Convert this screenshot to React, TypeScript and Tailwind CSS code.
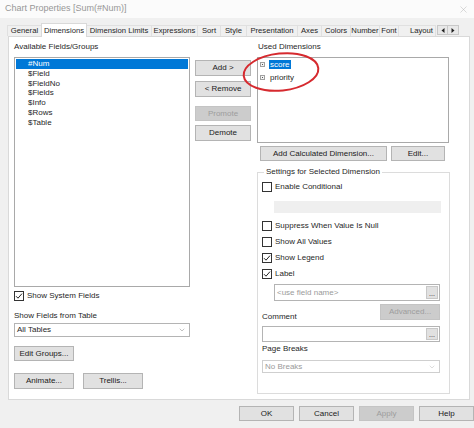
import { ChevronDown, X } from "lucide-react";

type BtnProps = { children?: React.ReactNode; className?: string; disabled?: boolean };

function Btn({ children, className = "", disabled = false }: BtnProps) {
  return (
    <div
      className={`flex items-center justify-center border ${
        disabled ? "bg-[#cccccc] border-[#c4c4c4] text-[#9d9d9d]" : "bg-[#e1e1e1] border-[#b4b4b4] text-[#1a1a1a]"
      } ${className}`}
    >
      {children}
    </div>
  );
}

function Check({ checked = false, label }: { checked?: boolean; label: string }) {
  return (
    <div className="flex items-center h-[10px] gap-[3px]">
      <div className="w-[10px] h-[10px] border border-[#333] bg-white flex items-center justify-center">
        {checked && (
          <svg width="8" height="8" viewBox="0 0 8 8">
            <path d="M1 4.2 L3 6.2 L7 1.6" fill="none" stroke="#222" strokeWidth="1" />
          </svg>
        )}
      </div>
      <span className="leading-[10px]">{label}</span>
    </div>
  );
}

const tabs: { label: string; w: string; active?: boolean; cls?: string }[] = [
  { label: "General", w: "w-[35px]" },
  { label: "Dimensions", w: "w-[46px]", active: true },
  { label: "Dimension Limits", w: "w-[66px]" },
  { label: "Expressions", w: "w-[47px]" },
  { label: "Sort", w: "w-[24px]" },
  { label: "Style", w: "w-[27px]" },
  { label: "Presentation", w: "w-[52px]" },
  { label: "Axes", w: "w-[25px]" },
  { label: "Colors", w: "w-[30px]" },
  { label: "Number", w: "w-[30px]" },
  { label: "Font", w: "w-[20px]" },
  { label: "Layout", w: "w-[38px]", cls: "justify-end pr-[2px]" },
];

const fields = ["#Num", "$Field", "$FieldNo", "$Fields", "$Info", "$Rows", "$Table"];

function TreeBox() {
  return (
    <div className="w-[5px] h-[5px] border border-[#a0a0a0] bg-[#f4f4f4] flex items-center justify-center mr-[4px]">
      <div className="w-[1px] h-[1px] bg-[#555]" />
    </div>
  );
}

export default function App() {
  return (
    <div className="relative w-[474px] h-[428px] overflow-hidden bg-[#f0f0f0] text-[8px] text-[#1f1f1f] font-['Liberation_Sans',Arial,sans-serif]">
      {/* title bar */}
      <div className="h-[18px] bg-[#fbfbfb] flex items-center justify-between pl-[5px] pr-[5px]">
        <span className="text-[9px] text-[#979797]">Chart Properties [Sum(#Num)]</span>
        <X size={11} strokeWidth={1} className="text-[#b0b0b0]" />
      </div>

      {/* tabs */}
      <div className="flex items-end h-[18px] pl-[8px] text-[7.7px]">
        {tabs.map((t) =>
          t.active ? (
            <div
              key={t.label}
              className={`${t.w} h-[14px] -ml-px -mb-px bg-white border border-[#d9d9d9] border-b-0 flex items-center justify-center relative z-10`}
            >
              {t.label}
            </div>
          ) : (
            <div
              key={t.label}
              className={`${t.w} h-[11px] -ml-px bg-[#f0f0f0] border border-[#e0e0e0] border-b-0 flex items-center ${t.cls ?? "justify-center"}`}
            >
              {t.label}
            </div>
          )
        )}
        <div className="ml-[1px] mb-[1px] flex h-[10px] border border-[#c8c8c8] bg-[#e8e8e8]">
          <div className="w-[10px] flex items-center justify-center border-r border-[#c8c8c8]">
            <svg width="4" height="5" viewBox="0 0 4 5"><path d="M3.5 0 L0.5 2.5 L3.5 5Z" fill="#222" /></svg>
          </div>
          <div className="w-[10px] flex items-center justify-center">
            <svg width="4" height="5" viewBox="0 0 4 5"><path d="M0.5 0 L3.5 2.5 L0.5 5Z" fill="#222" /></svg>
          </div>
        </div>
      </div>

      {/* tab content panel */}
      <div className="ml-[8px] w-[462px] h-[364px] bg-white border border-[#d9d9d9] flex pt-[5px] pl-[5px]">
        {/* left column */}
        <div className="w-[176px] flex flex-col">
          <div className="leading-[10px] h-[10px]">Available Fields/Groups</div>
          <div className="mt-[5px] h-[230px] border border-[#a9a9a9] pt-px px-px">
            {fields.map((f, i) => (
              <div
                key={f}
                className={`h-[9.8px] leading-[9.8px] pl-[12px] ${i === 0 ? "bg-[#0078d7] text-white" : ""}`}
              >
                {f}
              </div>
            ))}
          </div>
          <div className="mt-[4px]">
            <Check checked label="Show System Fields" />
          </div>
          <div className="mt-[10px] leading-[10px] h-[10px]">Show Fields from Table</div>
          <div className="mt-[2px] h-[14px] border border-[#b4b4b4] flex items-center justify-between pl-[2px] pr-[3px]">
            <span>All Tables</span>
            <ChevronDown size={8} strokeWidth={1.2} className="text-[#666]" />
          </div>
          <Btn className="mt-[9px] w-[60px] h-[15px]">Edit Groups...</Btn>
          <div className="mt-[12px] flex gap-[9px]">
            <Btn className="w-[60px] h-[16px]">Animate...</Btn>
            <Btn className="w-[60px] h-[16px]">Trellis...</Btn>
          </div>
        </div>

        {/* middle buttons */}
        <div className="ml-[5px] w-[56px] flex flex-col pt-[18px]">
          <Btn className="h-[16px]">Add &gt;</Btn>
          <Btn className="mt-[5px] h-[16px]">&lt; Remove</Btn>
          <Btn disabled className="mt-[9px] h-[15px]">Promote</Btn>
          <Btn className="mt-[4px] h-[16px]">Demote</Btn>
        </div>

        {/* right column */}
        <div className="ml-[6px] w-[192px] flex flex-col">
          <div className="leading-[10px] h-[10px] pl-[1px]">Used Dimensions</div>
          <div className="mt-[5px] h-[86px] border border-[#a9a9a9] pt-[2px] pl-[2px]">
            <div className="flex items-center h-[9px]">
              <TreeBox />
              <span className="bg-[#0078d7] text-white px-[1px] leading-[9px]">score</span>
            </div>
            <div className="flex items-center h-[9px] mt-[3.5px]">
              <TreeBox />
              <span className="px-[1px] leading-[9px]">priority</span>
            </div>
          </div>
          <div className="mt-[3px] flex pl-[3px] gap-[4px]">
            <Btn className="w-[127px] h-[15px]">Add Calculated Dimension...</Btn>
            <Btn className="w-[54px] h-[15px]">Edit...</Btn>
          </div>
          <fieldset className="mt-[6px] w-[193px] h-[227px] border border-[#dcdcdc] pl-[4px]">
            <legend className="ml-[2px] px-[2px] leading-[10px]">Settings for Selected Dimension</legend>
            <div className="mt-[5px]">
              <Check label="Enable Conditional" />
            </div>
            <div className="mt-[9px] ml-[12px] w-[167px] h-[12px] bg-[#efefef]" />
            <div className="mt-[8px]">
              <Check label="Suppress When Value Is Null" />
            </div>
            <div className="mt-[6px]">
              <Check label="Show All Values" />
            </div>
            <div className="mt-[6px]">
              <Check checked label="Show Legend" />
            </div>
            <div className="mt-[6px]">
              <Check checked label="Label" />
            </div>
            <div className="mt-[5px] ml-[12px] w-[166px] h-[17px] border border-[#b4b4b4] flex items-center justify-between pl-[2px] pr-px">
              <span className="text-[#9a9a9a]">&lt;use field name&gt;</span>
              <div className="w-[12px] h-[13px] bg-[#e1e1e1] border border-[#c8c8c8] flex items-end justify-center text-[7px] leading-[9px]">...</div>
            </div>
            <div className="mt-[3px] flex items-end justify-between w-[178px] h-[16px]">
              <span className="leading-[10px] -mb-[2px]">Comment</span>
              <Btn disabled className="w-[60px] h-[16px]">Advanced...</Btn>
            </div>
            <div className="mt-[6px] w-[178px] h-[16px] border border-[#b4b4b4] flex items-center justify-end pr-px">
              <div className="w-[12px] h-[12px] bg-[#e1e1e1] border border-[#c8c8c8] flex items-end justify-center text-[7px] leading-[9px]">...</div>
            </div>
            <div className="mt-[2px] leading-[10px]">Page Breaks</div>
            <div className="mt-[6px] w-[178px] h-[13px] border border-[#cfcfcf] flex items-center justify-between pl-[2px] pr-[3px] text-[#9a9a9a]">
              <span>No Breaks</span>
              <ChevronDown size={8} strokeWidth={1.2} className="text-[#aaa]" />
            </div>
          </fieldset>
        </div>
      </div>

      {/* dialog buttons */}
      <div className="flex justify-end gap-[5px] mt-[6px]">
        <Btn className="w-[55px] h-[15px]">OK</Btn>
        <Btn className="w-[55px] h-[15px]">Cancel</Btn>
        <Btn disabled className="w-[55px] h-[15px]">Apply</Btn>
        <Btn className="w-[55px] h-[15px]">Help</Btn>
      </div>

      {/* red annotation ellipse */}
      <svg className="absolute left-[239px] top-[49px]" width="86" height="48" viewBox="0 0 86 48">
        <ellipse cx="42" cy="23" rx="37.5" ry="18.5" transform="rotate(-6 42 23)" fill="none" stroke="#d62a2f" strokeWidth="2" />
      </svg>
    </div>
  );
}
